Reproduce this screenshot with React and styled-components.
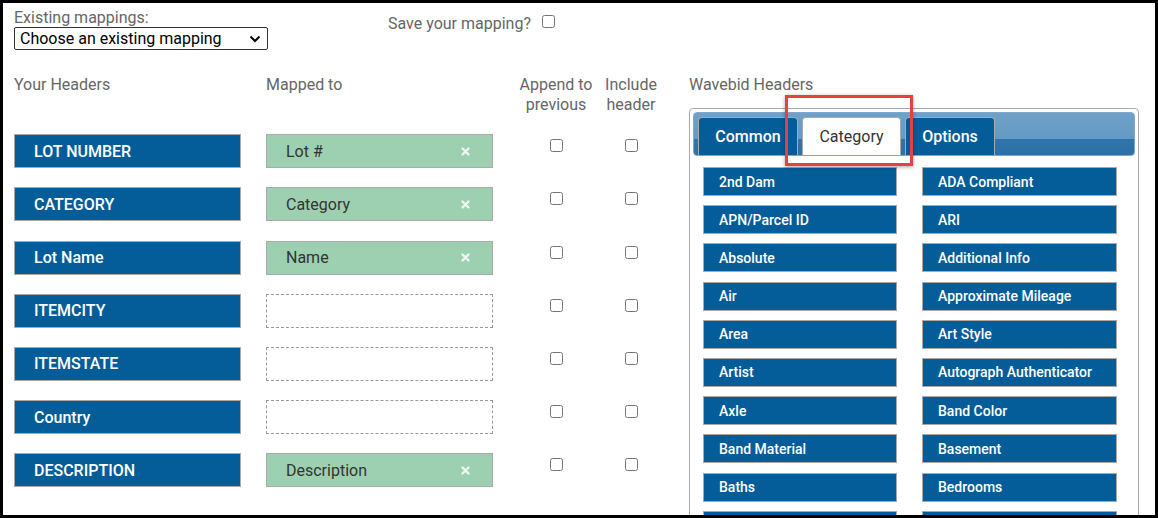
import React from "react";
import styled, { createGlobalStyle } from "styled-components";

const Global = createGlobalStyle`
  html, body { margin: 0; padding: 0; background: #fff; }
  body { font-family: Roboto, "Liberation Sans", Arial, sans-serif; }
  * { box-sizing: border-box; }
`;

const BLUE = "#045d99";

const Frame = styled.div`
  position: relative;
  width: 1158px;
  height: 518px;
  border: 3px solid #000;
  padding: 0 11px;
  overflow: hidden;
  background: #fff;
`;

const TopBar = styled.div`
  display: flex;
  align-items: flex-start;
  padding-top: 5px;
`;

const MappingPicker = styled.div`
  display: flex;
  flex-direction: column;
  width: 254px;
`;

const Label = styled.div`
  font-size: 16px;
  line-height: 19px;
  color: #666;
`;

const SelectWrap = styled.div`
  position: relative;
  width: 254px;
  height: 23px;
  border: 1px solid #333;
  border-radius: 2px;
  background: #fff;
`;

const Select = styled.select`
  appearance: none;
  -webkit-appearance: none;
  border: none;
  outline: none;
  background: transparent;
  width: 100%;
  height: 100%;
  padding: 0 0 0 5px;
  font-family: Roboto, "Liberation Sans", Arial, sans-serif;
  font-size: 16px;
  color: #000;
`;

const Chevron = styled.svg`
  position: absolute;
  right: 6px;
  top: 7px;
  pointer-events: none;
`;

const SaveGroup = styled.label`
  display: flex;
  align-items: center;
  gap: 11px;
  margin-left: 120px;
  margin-top: 6px;
  font-size: 16px;
  line-height: 20px;
  color: #666;
`;

const Checkbox = styled.input.attrs({ type: "checkbox" })`
  width: 13px;
  height: 13px;
  margin: ${(p) => p.$mt || 0}px 0 0 0;
`;

const Main = styled.div`
  display: flex;
  align-items: flex-start;
  margin-top: 25px;
`;

const MapGrid = styled.div`
  display: grid;
  grid-template-columns: 252px 247px 86px 64px;
  grid-template-rows: 40px repeat(7, 34px);
  row-gap: 19.2px;
`;

const ColHead = styled.div`
  font-size: 16px;
  line-height: 20px;
  color: #666;
  text-align: ${(p) => (p.$center ? "center" : "left")};
`;

const HeaderBox = styled.div`
  width: 227px;
  height: 34px;
  background: ${BLUE};
  border: 1px solid #aaa;
  color: #fff;
  font-weight: 500;
  font-size: 16px;
  display: flex;
  align-items: center;
  padding-left: 19px;
`;

const MappedBox = styled.div`
  width: 227px;
  height: 34px;
  background: ${(p) => (p.$filled ? "#9dd0b0" : "#fff")};
  border: 1px ${(p) => (p.$filled ? "solid #aaa" : "dashed #999")};
  color: #333;
  font-size: 16px;
  display: flex;
  align-items: center;
  justify-content: space-between;
  padding: 0 22px 0 19px;
`;

const CheckCell = styled.div`
  display: flex;
  justify-content: center;
  align-items: flex-start;
`;

const Wavebid = styled.div`
  display: flex;
  flex-direction: column;
  margin-left: 26px;
`;

const Panel = styled.div`
  margin-top: 13px;
  width: 450px;
  height: 420px;
  border: 1px solid #aaa;
  border-radius: 4px;
  padding: 3px;
`;

const TabBar = styled.div`
  display: flex;
  align-items: flex-end;
  gap: 4px;
  height: 44px;
  padding: 5px 4px 0;
  border: 1px solid #7fa7c9;
  border-radius: 4px;
  background: linear-gradient(
    to bottom,
    #6fa2ca 0%,
    #6399c3 62%,
    #2f74aa 63%,
    #2b70a7 100%
  );
`;

const Tab = styled.div`
  width: ${(p) => p.$w}px;
  height: 38px;
  display: flex;
  align-items: center;
  justify-content: center;
  font-size: 16px;
  font-weight: ${(p) => (p.$active ? 400 : 500)};
  color: ${(p) => (p.$active ? "#333" : "#fff")};
  background: ${(p) => (p.$active ? "#fff" : BLUE)};
  border: 1px solid #aaa;
  border-bottom: none;
  border-radius: 4px 4px 0 0;
`;

const ItemGrid = styled.div`
  display: grid;
  grid-template-columns: 194px 195px;
  column-gap: 25px;
  row-gap: 9.2px;
  grid-auto-rows: 29px;
  margin: 11px 0 0 10px;
`;

const Item = styled.div`
  background: ${BLUE};
  border: 1px solid #aaa;
  color: #fff;
  font-size: 14px;
  font-weight: 500;
  display: flex;
  align-items: center;
  padding-left: 15px;
  white-space: nowrap;
`;

const Highlight = styled.div`
  position: absolute;
  left: 782px;
  top: 92px;
  width: 128px;
  height: 71px;
  border: 3px solid #e5413f;
  box-shadow: 0 1px 4px rgba(0, 0, 0, 0.35);
  pointer-events: none;
`;

const Remove = () => (
  <svg width="9" height="9" viewBox="0 0 9 9">
    <path d="M1.5 1.5 L7.5 7.5 M7.5 1.5 L1.5 7.5" stroke="#eef7f1" strokeWidth="2.4" strokeLinecap="round" />
  </svg>
);

const rows = [
  ["LOT NUMBER", "Lot #"],
  ["CATEGORY", "Category"],
  ["Lot Name", "Name"],
  ["ITEMCITY", null],
  ["ITEMSTATE", null],
  ["Country", null],
  ["DESCRIPTION", "Description"],
];

const items = [
  "2nd Dam", "ADA Compliant",
  "APN/Parcel ID", "ARI",
  "Absolute", "Additional Info",
  "Air", "Approximate Mileage",
  "Area", "Art Style",
  "Artist", "Autograph Authenticator",
  "Axle", "Band Color",
  "Band Material", "Basement",
  "Baths", "Bedrooms",
  "", "",
];

export default function App() {
  return (
    <>
      <Global />
      <Frame>
        <TopBar>
          <MappingPicker>
            <Label>Existing mappings:</Label>
            <SelectWrap>
              <Select defaultValue="">
                <option value="">Choose an existing mapping</option>
              </Select>
              <Chevron width="12" height="8" viewBox="0 0 12 8">
                <path d="M1.5 1.5 L6 6 L10.5 1.5" fill="none" stroke="#000" strokeWidth="2" />
              </Chevron>
            </SelectWrap>
          </MappingPicker>
          <SaveGroup>
            Save your mapping?
            <Checkbox $mt={-6} />
          </SaveGroup>
        </TopBar>
        <Main>
          <MapGrid>
            <ColHead>Your Headers</ColHead>
            <ColHead>Mapped to</ColHead>
            <ColHead $center>Append to<br />previous</ColHead>
            <ColHead $center>Include<br />header</ColHead>
            {rows.map(([h, m]) => (
              <React.Fragment key={h}>
                <HeaderBox>{h}</HeaderBox>
                <MappedBox $filled={!!m}>
                  {m && <span>{m}</span>}
                  {m && <Remove />}
                </MappedBox>
                <CheckCell><Checkbox $mt={5} /></CheckCell>
                <CheckCell><Checkbox $mt={5} /></CheckCell>
              </React.Fragment>
            ))}
          </MapGrid>
          <Wavebid>
            <ColHead>Wavebid Headers</ColHead>
            <Panel>
              <TabBar>
                <Tab $w={100}>Common</Tab>
                <Tab $active $w={99}>Category</Tab>
                <Tab $w={90}>Options</Tab>
              </TabBar>
              <ItemGrid>
                {items.map((it, i) => (
                  <Item key={i}>{it}</Item>
                ))}
              </ItemGrid>
            </Panel>
          </Wavebid>
        </Main>
        <Highlight />
      </Frame>
    </>
  );
}
